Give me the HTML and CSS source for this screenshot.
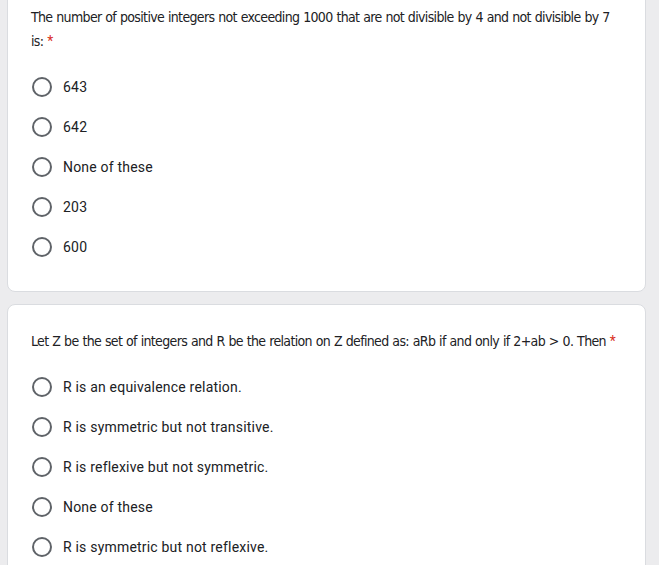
FILE: index.html
```html
<!DOCTYPE html>
<html>
<head>
<meta charset="utf-8">
<link rel="stylesheet" href="styles.css">
</head>
<body>
<div class="page">
  <div class="card first">
    <div class="question">The number of positive integers not exceeding 1000 that are not divisible by 4 and not divisible by 7 is: <span class="req">*</span></div>
    <div class="options">
      <label class="option"><span class="radio"></span><span class="label">643</span></label>
      <label class="option"><span class="radio"></span><span class="label">642</span></label>
      <label class="option"><span class="radio"></span><span class="label">None of these</span></label>
      <label class="option"><span class="radio"></span><span class="label">203</span></label>
      <label class="option"><span class="radio"></span><span class="label">600</span></label>
    </div>
  </div>
  <div class="card">
    <div class="question">Let Z be the set of integers and R be the relation on Z defined as: aRb if and only if 2+ab &gt; 0. <span class="nowrap">Then <span class="req">*</span></span></div>
    <div class="options">
      <label class="option"><span class="radio"></span><span class="label">R is an equivalence relation.</span></label>
      <label class="option"><span class="radio"></span><span class="label">R is symmetric but not transitive.</span></label>
      <label class="option"><span class="radio"></span><span class="label">R is reflexive but not symmetric.</span></label>
      <label class="option"><span class="radio"></span><span class="label">None of these</span></label>
      <label class="option"><span class="radio"></span><span class="label">R is symmetric but not reflexive.</span></label>
    </div>
  </div>
</div>
</body>
</html>
```
FILE: styles.css
```css
html, body {
  margin: 0;
  padding: 0;
  background: #ececee;
  overflow: hidden;
}
.page {
  width: 639px;
  margin-left: 7px;
  display: flex;
  flex-direction: column;
  gap: 12px;
}
.card {
  background: #fff;
  border: 1px solid #dadce0;
  border-radius: 8px;
  padding: 24px 23px 24px 23px;
}
.card.first {
  margin-top: -20px;
  border-top-left-radius: 0;
  border-top-right-radius: 0;
}
.question {
  font-family: "DejaVu Sans Condensed", "DejaVu Sans", sans-serif;
  font-stretch: condensed;
  font-size: 14px;
  line-height: 24px;
  color: #202124;
  letter-spacing: -0.66px;
  word-spacing: 0.5px;
}
.nowrap {
  white-space: nowrap;
}
.req {
  color: #d93025;
  font-family: Roboto, sans-serif;
  letter-spacing: 0;
}
.options {
  margin-top: 14px;
  display: flex;
  flex-direction: column;
}
.option {
  height: 40px;
  display: flex;
  align-items: center;
  padding-left: 1px;
}
.radio {
  width: 16px;
  height: 16px;
  border: 2px solid #5f6368;
  border-radius: 50%;
  flex: none;
}
.label {
  margin-left: 11px;
  font-family: Roboto, sans-serif;
  font-size: 14px;
  letter-spacing: 0.2px;
  color: #202124;
}
```
